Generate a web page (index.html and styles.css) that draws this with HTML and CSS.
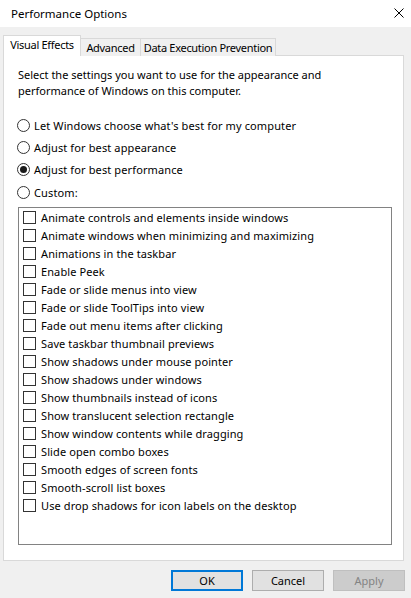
FILE: index.html
```html
<!DOCTYPE html>
<html>
<head>
<meta charset="utf-8">
<link rel="stylesheet" href="styles.css">
</head>
<body>
<div class="window">
  <div class="titlebar">
    <span class="title">Performance Options</span>
    <svg class="close" width="10" height="10" viewBox="0 0 10 10"><path d="M0.5 0.5 L9.5 9.5 M9.5 0.5 L0.5 9.5" stroke="#000" stroke-width="1" fill="none"/></svg>
  </div>
  <div class="tabs">
    <div class="tab active t1">Visual Effects</div>
    <div class="tab t2">Advanced</div>
    <div class="tab t3">Data Execution Prevention</div>
  </div>
  <div class="panel">
    <p class="desc">Select the settings you want to use for the appearance and<br>performance of Windows on this computer.</p>
    <div class="radios">
      <div class="radio"><span class="dot"></span><span>Let Windows choose what's best for my computer</span></div>
      <div class="radio"><span class="dot"></span><span>Adjust for best appearance</span></div>
      <div class="radio"><span class="dot on"></span><span>Adjust for best performance</span></div>
      <div class="radio"><span class="dot"></span><span>Custom:</span></div>
    </div>
    <div class="list">
      <div class="item"><span class="box"></span><span>Animate controls and elements inside windows</span></div>
      <div class="item"><span class="box"></span><span>Animate windows when minimizing and maximizing</span></div>
      <div class="item"><span class="box"></span><span>Animations in the taskbar</span></div>
      <div class="item"><span class="box"></span><span>Enable Peek</span></div>
      <div class="item"><span class="box"></span><span>Fade or slide menus into view</span></div>
      <div class="item"><span class="box"></span><span>Fade or slide ToolTips into view</span></div>
      <div class="item"><span class="box"></span><span>Fade out menu items after clicking</span></div>
      <div class="item"><span class="box"></span><span>Save taskbar thumbnail previews</span></div>
      <div class="item"><span class="box"></span><span>Show shadows under mouse pointer</span></div>
      <div class="item"><span class="box"></span><span>Show shadows under windows</span></div>
      <div class="item"><span class="box"></span><span>Show thumbnails instead of icons</span></div>
      <div class="item"><span class="box"></span><span>Show translucent selection rectangle</span></div>
      <div class="item"><span class="box"></span><span>Show window contents while dragging</span></div>
      <div class="item"><span class="box"></span><span>Slide open combo boxes</span></div>
      <div class="item"><span class="box"></span><span>Smooth edges of screen fonts</span></div>
      <div class="item"><span class="box"></span><span>Smooth-scroll list boxes</span></div>
      <div class="item"><span class="box"></span><span>Use drop shadows for icon labels on the desktop</span></div>
    </div>
  </div>
  <div class="buttons">
    <button class="btn default">OK</button>
    <button class="btn">Cancel</button>
    <button class="btn disabled">Apply</button>
  </div>
</div>
</body>
</html>
```
FILE: styles.css
```css
* { box-sizing: border-box; }
html, body { margin: 0; padding: 0; }
body {
  width: 411px;
  height: 598px;
  background: #f0f0f0;
  font-family: "Noto Sans", "Open Sans", sans-serif;
  font-size: 11px;
  color: #000;
  overflow: hidden;
}
.window { display: flex; flex-direction: column; height: 598px; }
.titlebar {
  height: 27px;
  background: #fff;
  display: flex;
  align-items: center;
  justify-content: space-between;
  padding: 0 7px 0 11px;
}
.title { font-size: 11.5px; }
.close { display: block; margin-top: -1px; }
.tabs {
  display: flex;
  align-items: flex-end;
  margin-top: 8px;
  padding-left: 3px;
  height: 21px;
  position: relative;
  z-index: 1;
  margin-bottom: -1px;
}
.tab {
  height: 18px;
  border: 1px solid #d9d9d9;
  border-bottom: none;
  border-left: none;
  display: flex;
  align-items: center;
  justify-content: center;
  background: #f0f0f0;
  line-height: 16px;
  white-space: nowrap;
  letter-spacing: -0.3px;
}
.tab.active {
  height: 21px;
  background: #fff;
  border-left: 1px solid #d9d9d9;
  padding-bottom: 2px;
}
.t1 { width: 78px; }
.t2 { width: 60px; }
.t3 { width: 135px; }
.panel {
  margin: 0 7px 0 3px;
  height: 506px;
  background: #fff;
  border: 1px solid #d9d9d9;
  padding: 11px 12px 0 14px;
  display: flex;
  flex-direction: column;
}
.desc { margin: 0; line-height: 16px; }
.radios { margin-top: 15px; display: flex; flex-direction: column; letter-spacing: 0.12px; }
.radio { height: 22px; display: flex; align-items: center; margin-left: -1px; }
.radio:last-child { margin-top: 1px; }
.dot {
  width: 13px; height: 13px;
  border: 1px solid #333;
  border-radius: 50%;
  margin-right: 4px;
  display: flex; align-items: center; justify-content: center;
  flex: none;
}
.dot.on::after {
  content: "";
  width: 7px; height: 7px;
  border-radius: 50%;
  background: #1a1a1a;
}
.list {
  margin-top: 4px;
  height: 338px;
  width: 374px;
  border: 1px solid #828282;
  padding: 0 0 0 4px;
  letter-spacing: 0.1px;
}
.item { height: 18px; display: flex; align-items: center; }
.box {
  width: 13px; height: 13px;
  border: 1px solid #333;
  margin-right: 5px;
  flex: none;
}
.buttons {
  display: flex;
  justify-content: flex-end;
  gap: 9px;
  margin-top: 9px;
  padding-right: 6px;
}
.btn {
  width: 72px; height: 21px;
  font-family: inherit; font-size: 11px;
  background: #e1e1e1;
  border: 1px solid #adadad;
  color: #000;
  padding: 0;
}
.btn.default { border: 2px solid #0078d7; }
.btn.disabled { background: #cccccc; border-color: #bfbfbf; color: #838383; }
```
